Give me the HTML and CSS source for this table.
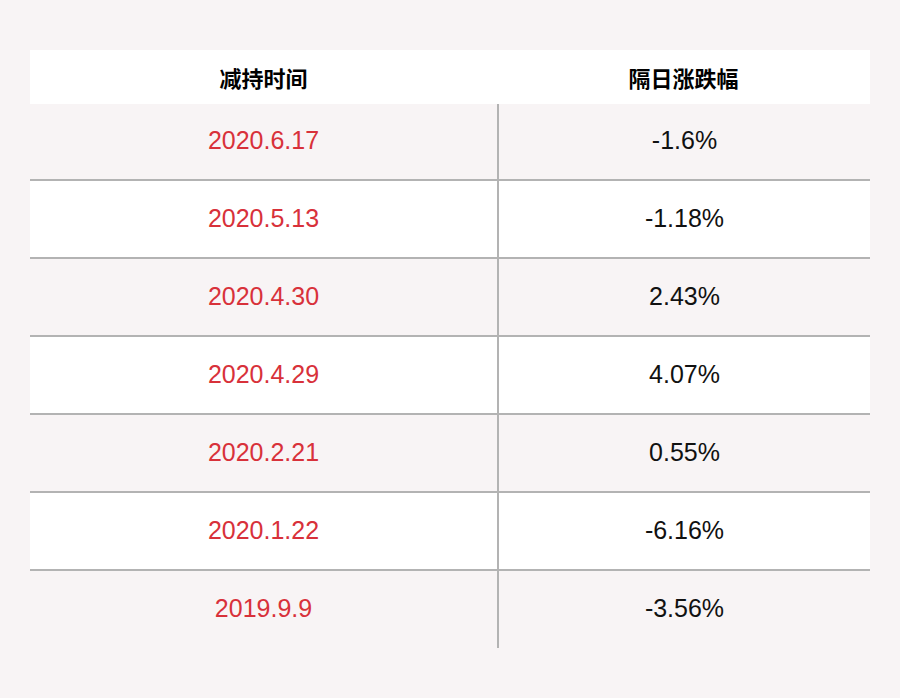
FILE: index.html
```html
<!DOCTYPE html>
<html lang="zh">
<head>
<meta charset="utf-8">
<title>减持时间</title>
<link rel="stylesheet" href="styles.css">
</head>
<body>
<div class="table">
  <div class="row head">
    <div class="cell">减持时间</div>
    <div class="cell">隔日涨跌幅</div>
  </div>
  <div class="row odd first">
    <div class="cell date">2020.6.17</div>
    <div class="cell val">-1.6%</div>
  </div>
  <div class="row even">
    <div class="cell date">2020.5.13</div>
    <div class="cell val">-1.18%</div>
  </div>
  <div class="row odd">
    <div class="cell date">2020.4.30</div>
    <div class="cell val">2.43%</div>
  </div>
  <div class="row even">
    <div class="cell date">2020.4.29</div>
    <div class="cell val">4.07%</div>
  </div>
  <div class="row odd">
    <div class="cell date">2020.2.21</div>
    <div class="cell val">0.55%</div>
  </div>
  <div class="row even">
    <div class="cell date">2020.1.22</div>
    <div class="cell val">-6.16%</div>
  </div>
  <div class="row odd last">
    <div class="cell date">2019.9.9</div>
    <div class="cell val">-3.56%</div>
  </div>
</div>
</body>
</html>
```
FILE: styles.css
```css
html, body {
  margin: 0;
  padding: 0;
  background: #f8f4f5;
}
body {
  padding: 50px 30px;
  font-family: "Liberation Sans", Arial, "Noto Sans CJK SC", sans-serif;
}
.table {
  width: 840px;
}
.row {
  display: grid;
  grid-template-columns: 467px 373px;
  height: 76px;
  border-top: 2px solid #b3b3b3;
}
.row.head {
  height: 54px;
  border-top: none;
  background: #ffffff;
}
.row.first {
  border-top: none;
  height: 75px;
}
.row.last {
  height: 77px;
}
.row.odd {
  background: #f8f4f5;
}
.row.even {
  background: #ffffff;
}
.cell {
  display: flex;
  align-items: center;
  justify-content: center;
  font-size: 25px;
  padding-bottom: 2px;
}
.cell + .cell {
  border-left: 2px solid #b3b3b3;
}
.head .cell {
  font-family: "Noto Sans CJK SC", sans-serif;
  font-weight: bold;
  font-size: 22px;
  color: #000;
  padding-bottom: 0;
}
.head .cell + .cell {
  border-left: none;
}
.date {
  color: #d8313a;
}
.val {
  color: #111;
}
```
